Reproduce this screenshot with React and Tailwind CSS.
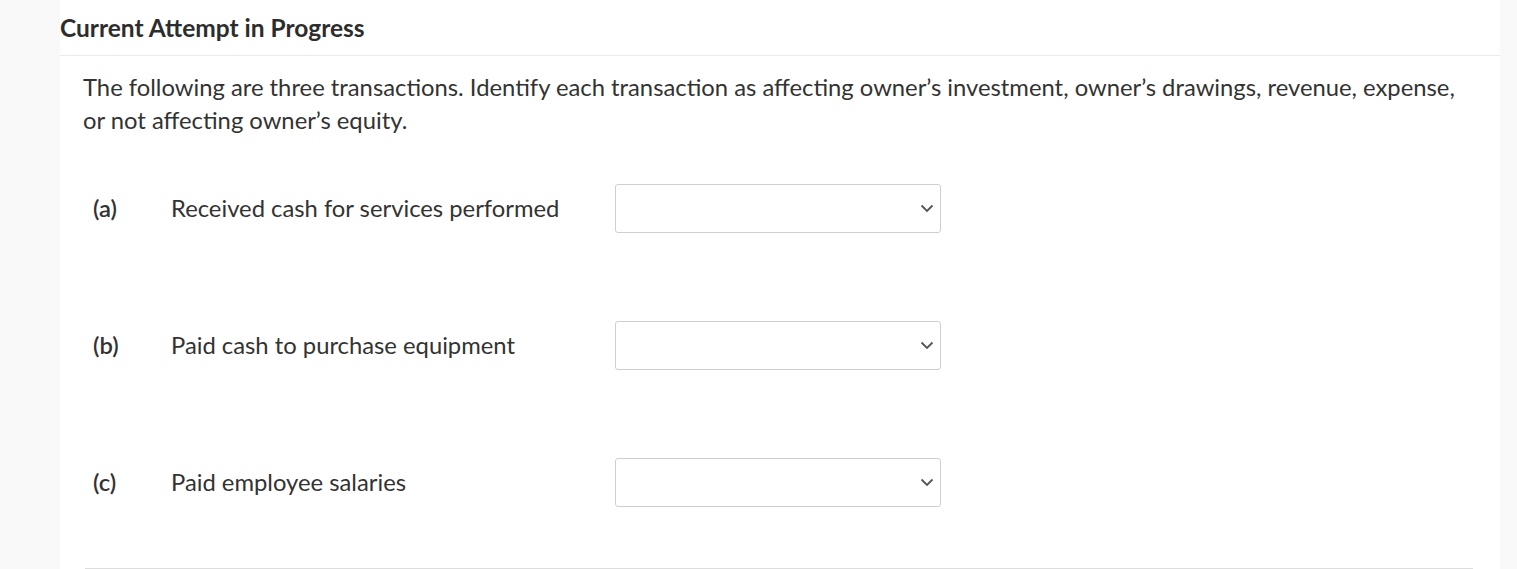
import React from "react";

const rows = [
  { key: "(a)", text: "Received cash for services performed" },
  { key: "(b)", text: "Paid cash to purchase equipment" },
  { key: "(c)", text: "Paid employee salaries" },
];

function Dropdown() {
  return (
    <div className="relative w-[326px] h-[49px] rounded-[3px] border border-[#cfcfcf] bg-white">
      <select className="w-full h-full appearance-none bg-transparent outline-none px-3" defaultValue="">
        <option value=""></option>
        <option>Owner’s investment</option>
        <option>Owner’s drawings</option>
        <option>Revenue</option>
        <option>Expense</option>
        <option>Not affecting owner’s equity</option>
      </select>
      <svg
        className="pointer-events-none absolute right-[6px] top-[19px]"
        width="14"
        height="9"
        viewBox="0 0 14 9"
        fill="none"
      >
        <path d="M1.5 1.5 L7 7 L12.5 1.5" stroke="#555" strokeWidth="1.8" />
      </svg>
    </div>
  );
}

export default function App() {
  return (
    <div className="min-h-screen bg-[#f9f9f9] font-['Lato',sans-serif] text-[#333]">
      <div className="ml-[60px] w-[1440px] bg-white">
        <h2 className="h-[56px] pt-[11px] border-b border-[#ebebeb] text-[24.5px] font-bold text-[#2d2d2d] leading-[34px]">
          Current Attempt in Progress
        </h2>

        <div className="px-[23px] pt-[15px]">
          <p className="text-[23.8px] leading-[33px] pr-[12px]">
            The following are three transactions. Identify each transaction as affecting owner’s investment, owner’s
            drawings, revenue, expense, or not affecting owner’s equity.
          </p>

          <div className="pt-[47px] flex flex-col gap-[88px]">
            {rows.map((row) => (
              <div key={row.key} className="flex items-center">
                <span className="ml-[10px] w-[78px] text-[23.8px] font-semibold">{row.key}</span>
                <span className="w-[444px] text-[23.8px]">{row.text}</span>
                <Dropdown />
              </div>
            ))}
          </div>

          <div className="mt-[61px] mr-[4px] ml-[2px] border-b-2 border-[#dddddd]" />
        </div>
      </div>
    </div>
  );
}
